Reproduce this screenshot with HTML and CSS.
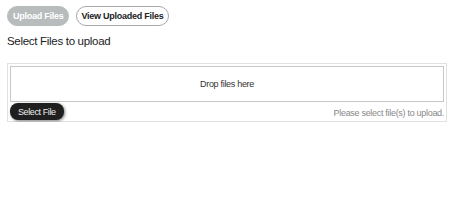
FILE: index.html
```html
<!DOCTYPE html>
<html lang="en">
<head>
  <meta charset="UTF-8" />
  <title>Upload Files</title>
  <link rel="stylesheet" href="styles.css">
</head>
<body>
  <div class="tabs">
    <button class="tab active">Upload Files</button>
    <button class="tab">View Uploaded Files</button>
  </div>

  <h3>Select Files to upload</h3>

  <div class="uploader">
    <div class="dropzone">Drop files here</div>
    <div class="footer">
      <button class="select-btn">Select File</button>
      <span class="status">Please select file(s) to upload.</span>
    </div>
  </div>
</body>
</html>
```

FILE: styles.css
```css
body {
  font-family: "Liberation Sans", Arial, sans-serif;
  margin: 0;
  padding: 6px 27px 0 7px;
  background: #fff;
  color: #222;
}

.tabs {
  display: flex;
  gap: 7px;
}

.tab {
  font-family: inherit;
  font-size: 9px;
  font-weight: bold;
  letter-spacing: -0.25px;
  height: 20px;
  padding: 0 4px 0 5px;
  border-radius: 10px;
  border: 1px solid #a9a9a9;
  background: #fff;
  color: #222;
  cursor: pointer;
}

.tab.active {
  background: #b9bcbc;
  border-color: #b9bcbc;
  color: #fff;
}

h3 {
  font-size: 11.5px;
  letter-spacing: -0.3px;
  font-weight: normal;
  margin: 8px 0 0;
  line-height: 15px;
  color: #222;
}

.uploader {
  margin-top: 14px;
  border: 1px solid #e1e1e1;
  padding: 2px 2px 1px;
}

.dropzone {
  height: 34px;
  border: 1px solid #c8c8c8;
  display: flex;
  align-items: center;
  justify-content: center;
  font-size: 9px;
  letter-spacing: -0.3px;
  color: #333;
}

.footer {
  display: flex;
  justify-content: space-between;
  align-items: center;
}

.select-btn {
  font-family: inherit;
  font-size: 9px;
  letter-spacing: -0.4px;
  color: #eee;
  background: #1f1f1f;
  border: none;
  border-radius: 8px;
  height: 17px;
  padding: 0 8px;
  margin-top: 1px;
  box-shadow: 1px 1px 3px rgba(0, 0, 0, 0.5);
}

.status {
  font-size: 9px;
  letter-spacing: -0.3px;
  color: #888;
  margin-top: 3px;
}
```
